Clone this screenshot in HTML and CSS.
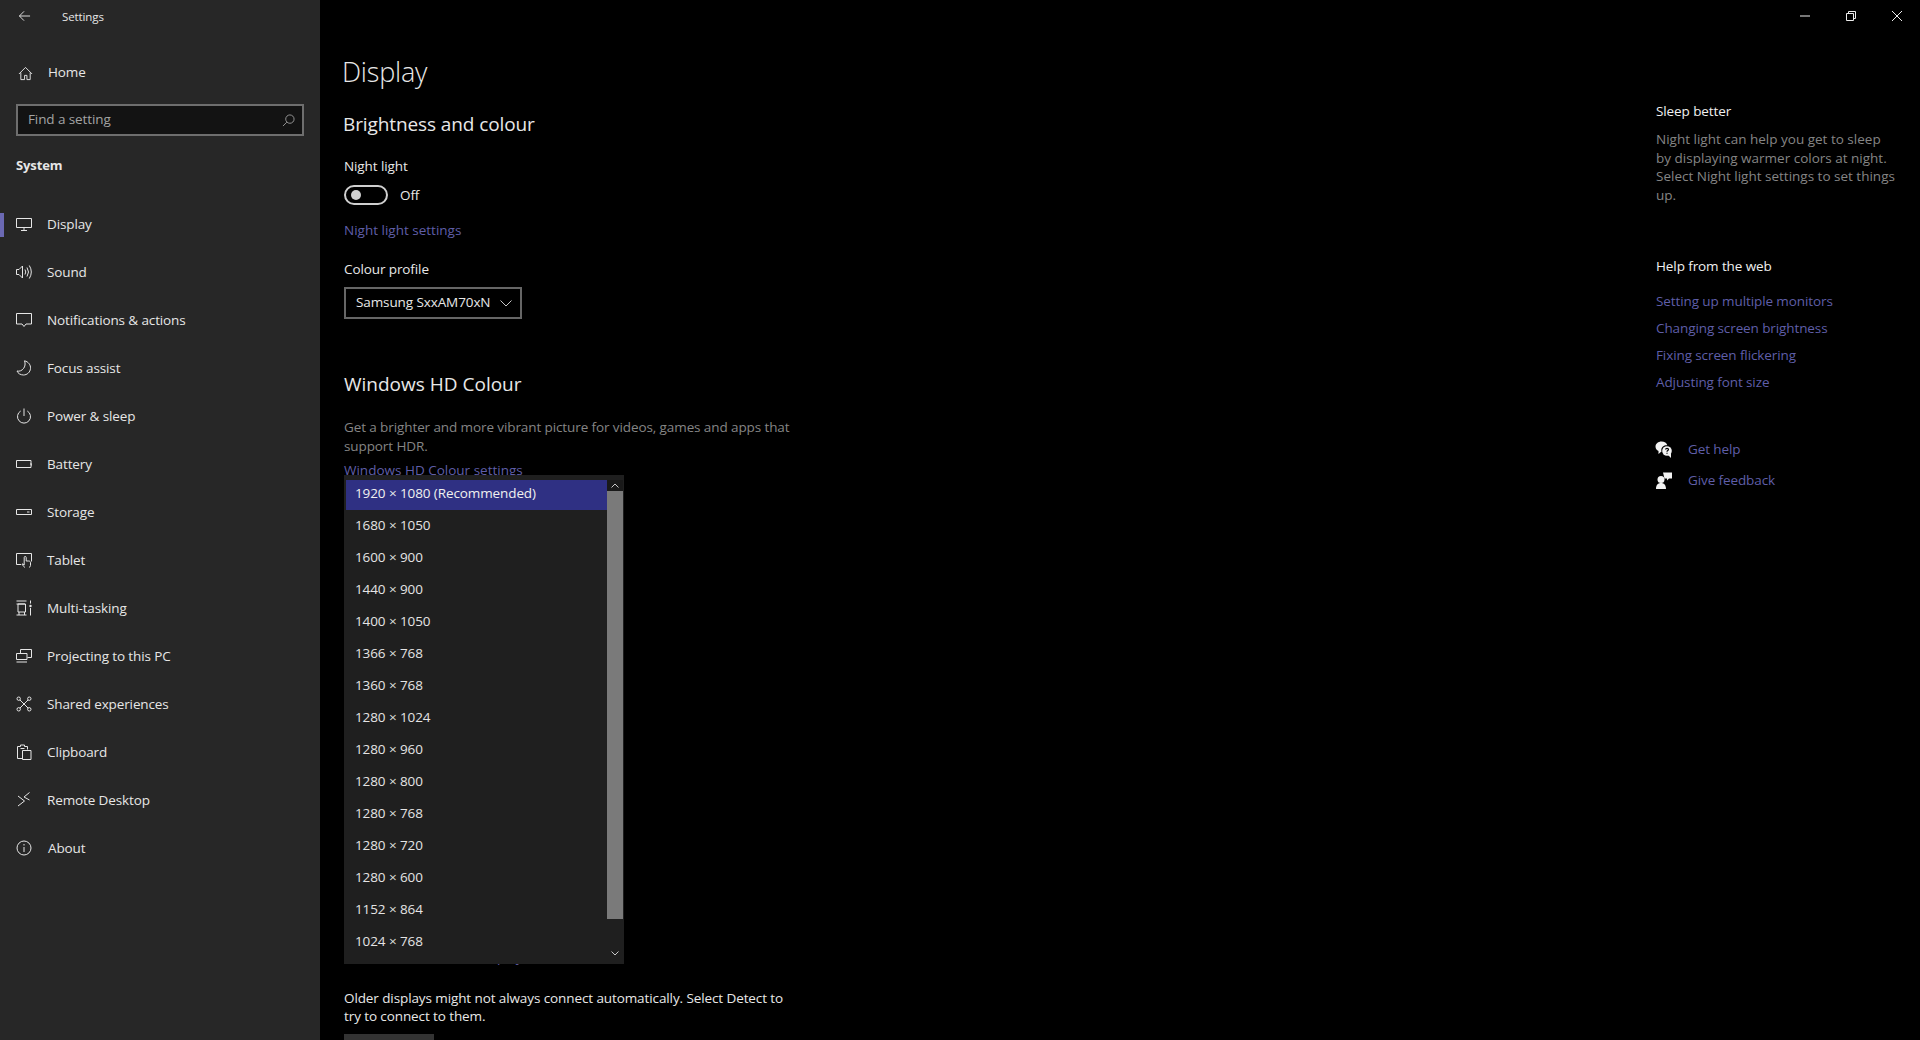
FILE: index.html
```html
<!DOCTYPE html>
<html lang="en">
<head>
<meta charset="utf-8">
<title>Settings</title>
<link rel="stylesheet" href="styles.css">
</head>
<body>
<div class="app">
  <aside class="sidebar">
    <div class="appbar">
      <svg class="ic back" viewBox="0 0 14 12"><path d="M13 6H1.500M6.500 1L1.500 6l5 5"/></svg>
      <span class="apptitle">Settings</span>
    </div>
    <div class="home">
      <svg class="ic" viewBox="0 0 16 16"><path d="M1 8.500L8 1.500l7 7M3 7v7.500h4V10h2.500v4.500H13V7"/></svg>
      <span>Home</span>
    </div>
    <div class="search">
      <span>Find a setting</span>
      <svg class="ic search-ic" viewBox="0 0 14 14"><circle cx="8.500" cy="5.500" r="4.500"/><path d="M5.200 8.800L1 13"/></svg>
    </div>
    <div class="system">System</div>
    <nav class="nav">
      <div class="row active"><svg class="ic" viewBox="0 0 16 16"><path d="M.5 2.500h15v9H.5zM8 11.500v2.500M5 14.500h6"/></svg><span>Display</span></div>
      <div class="row"><svg class="ic" viewBox="0 0 16 16"><path d="M.5 5.500h2.500L6.500 2v12L3 10.500H.5zM9 5.500q1.500 2.500 0 5M11 3.500q3 4.500 0 9M13.300 1.500q4 6.500 0 13"/></svg><span>Sound</span></div>
      <div class="row"><svg class="ic" viewBox="0 0 16 16"><path d="M.5 1.500h15v10.500h-5.500L8 14.500 6 12H.5z"/></svg><span>Notifications &amp; actions</span></div>
      <div class="row"><svg class="ic" viewBox="0 0 16 16"><path d="M8.500 .8c4 1 6.300 4.200 6 7.700-.3 3.700-3.400 6.500-7 6.500-3 0-5.600-1.600-6.500-4 5 1.300 9.800-4.400 7.500-10.200z"/></svg><span>Focus assist</span></div>
      <div class="row"><svg class="ic" viewBox="0 0 16 16"><path d="M8 .5v7.500M4.700 3a6.500 6.500 0 1 0 6.600 0"/></svg><span>Power &amp; sleep</span></div>
      <div class="row"><svg class="ic" viewBox="0 0 16 16"><path d="M.5 4.500h14.500v7H.5zM15 7v2h1"/></svg><span>Battery</span></div>
      <div class="row"><svg class="ic" viewBox="0 0 16 16"><path d="M.5 5.500h15v5H.5zM11 8h2.500"/></svg><span>Storage</span></div>
      <div class="row"><svg class="ic" viewBox="0 0 16 16"><path d="M5 12.500H.5v-11h15v8M9 15.500c-1.200-1-2.700-2.300-3-3.500l1 0 1.200 1V5.500a1 1 0 0 1 2 0V9h2.500c1.500 0 1.800 1 1.800 2v2.500l-1 2"/></svg><span>Tablet</span></div>
      <div class="row"><svg class="ic" viewBox="0 0 16 16"><path d="M.5 1h10M.5 15h10M2 4h7.500v8H2zM.5 4H9M3 12v3M8.500 12v3M14.500 .5v3M14.500 8v7.500"/><circle class="dot" cx="14.500" cy="6" r="1.200"/></svg><span>Multi-tasking</span></div>
      <div class="row"><svg class="ic" viewBox="0 0 16 16"><path d="M4.500 5.500v-4h11v8h-4M.5 5.500h10.500v6H.5zM.5 14h10.500"/></svg><span>Projecting to this PC</span></div>
      <div class="row"><svg class="ic" viewBox="0 0 16 16"><circle cx="2.700" cy="2.700" r="1.700"/><circle cx="13.300" cy="2.700" r="1.700"/><circle cx="2.700" cy="13.300" r="1.700"/><circle cx="13.300" cy="13.300" r="1.700"/><path d="M4 4l8 8M12 4l-8 8"/></svg><span>Shared experiences</span></div>
      <div class="row"><svg class="ic" viewBox="0 0 16 16"><path d="M6 14.500H1.500V2.500h3V1h4v1.500h3v3M6.500 6.500h8.500v9H6.500zM4.500 4.500h4"/></svg><span>Clipboard</span></div>
      <div class="row"><svg class="ic" viewBox="0 0 16 16"><path d="M2 4l6.500 5L2 14M13.500 .5L8 5l5.500 3"/></svg><span>Remote Desktop</span></div>
      <div class="row about"><svg class="ic" viewBox="0 0 16 16"><circle cx="8" cy="8" r="7"/><path d="M8 7v5M8 4v1.500"/></svg><span>About</span></div>
    </nav>
  </aside>

  <main class="main">
    <h1 class="title">Display</h1>
    <h2 class="h2 first">Brightness and colour</h2>
    <div class="label nl">Night light</div>
    <div class="toggle-row"><span class="toggle"><span class="knob"></span></span><span>Off</span></div>
    <a class="link settings">Night light settings</a>
    <div class="label cp">Colour profile</div>
    <div class="select"><span>Samsung SxxAM70xN</span><svg class="ic chev" viewBox="0 0 12 7"><path d="M.5 .5L6 6l5.500-5.500"/></svg></div>
    <h2 class="h2 hd">Windows HD Colour</h2>
    <p class="muted hdp">Get a brighter and more vibrant picture for videos, games and apps that support HDR.</p>
    <a class="link hdl">Windows HD Colour settings</a>
    <a class="link wireless">Connect to a wireless display</a>
    <p class="older">Older displays might not always connect automatically. Select Detect to try to connect to them.</p>
    <button class="detect">Detect</button>

    <div class="dropdown">
      <ul class="options">
        <li class="sel">1920 × 1080 (Recommended)</li>
        <li>1680 × 1050</li>
        <li>1600 × 900</li>
        <li>1440 × 900</li>
        <li>1400 × 1050</li>
        <li>1366 × 768</li>
        <li>1360 × 768</li>
        <li>1280 × 1024</li>
        <li>1280 × 960</li>
        <li>1280 × 800</li>
        <li>1280 × 768</li>
        <li>1280 × 720</li>
        <li>1280 × 600</li>
        <li>1152 × 864</li>
        <li>1024 × 768</li>
      </ul>
      <div class="scroll">
        <div class="sbtn up"><svg class="ic" viewBox="0 0 8 5"><path d="M.5 4.500L4 1l3.500 3.500"/></svg></div>
        <div class="thumb"></div>
        <div class="track"></div>
        <div class="sbtn"><svg class="ic" viewBox="0 0 8 5"><path d="M.5 .5L4 4 7.500 .5"/></svg></div>
      </div>
    </div>
  </main>

  <aside class="side">
    <div class="winctl">
      <div class="wbtn"><svg class="ic" viewBox="0 0 10 10"><path d="M0 5h10"/></svg></div>
      <div class="wbtn"><svg class="ic" viewBox="0 0 10 10"><path d="M.5 2.500h7v7h-7zM2.500 2.500V.5h7v7h-2"/></svg></div>
      <div class="wbtn"><svg class="ic" viewBox="0 0 10 10"><path d="M0 0l10 10M10 0L0 10"/></svg></div>
    </div>
    <div class="sidebody">
      <h3 class="h3">Sleep better</h3>
      <p class="muted sleep">Night light can help you get to sleep<br>by displaying warmer colors at night.<br>Select Night light settings to set things<br>up.</p>
      <h3 class="h3 web">Help from the web</h3>
      <ul class="weblinks">
        <li><a class="link">Setting up multiple monitors</a></li>
        <li><a class="link">Changing screen brightness</a></li>
        <li><a class="link">Fixing screen flickering</a></li>
        <li><a class="link">Adjusting font size</a></li>
      </ul>
      <div class="act gethelp">
        <svg class="act-ic" viewBox="0 0 17 17"><path class="fill" d="M6.500 .5c3 0 5.300 1.500 5.800 3.700-2.900-.4-6 1.500-6 4.800 0 .6.100 1.100.3 1.600l-.1 0-3 2.400v-3C1.700 9.100.5 7.300.5 5.400.5 2.700 3.200.5 6.500 .5z"/><circle class="fill" cx="12" cy="10" r="4.800"/><path class="fill" d="M13 14l3 3v-5z"/><path class="qm" d="M10.500 8.500c.2-1.500 3-1.500 3 0 0 1.200-1.500 1-1.500 2.300M12 11.800v1"/></svg>
        <a class="link">Get help</a>
      </div>
      <div class="act">
        <svg class="act-ic" viewBox="0 0 17 17"><circle class="fill" cx="6" cy="7.500" r="3.500"/><path class="fill" d="M1 17c0-4 2-6 5-6s5 2 5 6zM8 .5h9v6h-3l-2 2v-2H9.500z"/></svg>
        <a class="link">Give feedback</a>
      </div>
    </div>
  </aside>
</div>
</body>
</html>
```
FILE: styles.css
```css
* { box-sizing: border-box; }
html, body { margin: 0; height: 100%; overflow: hidden; background: #000; }
body { font-family: "Open Sans", "Noto Sans", sans-serif; font-size: 13.500px; letter-spacing: -.1px; color: #e8e8e8; }
h1, h2, h3, p, ul { margin: 0; padding: 0; font-weight: 400; }
ul { list-style: none; }
.app { display: flex; height: 1040px; overflow: hidden; }
.ic { fill: none; stroke: currentColor; stroke-width: 1; display: block; flex: none; }

/* sidebar */
.sidebar { width: 320px; flex: none; background: #272727; color: #e6e6e6; }
.appbar { display: flex; align-items: center; height: 34px; padding: 0 0 2px 18px; }
.back { width: 13px; height: 12px; margin-top: -1px; }
.apptitle { font-size: 11.500px; margin-left: 31px; }
.home { display: flex; align-items: center; height: 24px; margin-top: 27px; padding: 0 0 2px 18px; gap: 15px; font-size: 13.500px; }
.home .ic { width: 15px; height: 15px; margin-top: 2px; }
.search { display: flex; align-items: center; justify-content: space-between; width: 288px; height: 32px; margin: 19px 0 0 16px; padding: 0 7px 2px 10px; border: 2px solid #6e6e6e; background: #131313; color: #a3a3a3; }
.search-ic { width: 13px; height: 13px; color: #9a9a9a; margin-top: 2px; }
.system { margin: 18px 0 0 16px; padding-bottom: 1px; line-height: 22px; font-weight: 700; font-size: 13px; }
.nav { margin-top: 24px; }
.row { position: relative; display: flex; align-items: center; height: 48px; padding: 0 0 2px 16px; gap: 15px; letter-spacing: -.12px; }
.row .ic { width: 16px; height: 16px; }
.about { gap: 16px; }
.dot { fill: currentColor; stroke: none; }
.active::before { content: ""; position: absolute; left: 0; top: 12px; width: 4px; height: 24px; background: #6b69b3; }

/* main */
.main { position: relative; flex: 1; padding: 52px 0 0 24px; overflow: hidden; color: #e8e8e8; }
.title { font-size: 27px; line-height: 40px; margin-left: -2px; font-weight: 300; letter-spacing: -.2px; }
.h2 { font-size: 19px; line-height: 28px; letter-spacing: -.1px; }
.first { margin: 18px 0 0 -1px; }
.label { line-height: 20px; }
.nl { margin-top: 18px; }
.toggle-row { display: flex; align-items: center; gap: 12px; height: 20px; margin-top: 9px; }
.toggle { display: flex; align-items: center; width: 44px; height: 20px; padding-left: 5px; border: 2px solid #cfcfcf; border-radius: 10px; }
.knob { width: 10px; height: 10px; border-radius: 50%; background: #cfcfcf; }
.link { display: block; line-height: 20px; color: #5f5ea8; }
.settings { margin-top: 15px; letter-spacing: 0; }
.cp { margin-top: 19px; }
.select { display: flex; align-items: center; justify-content: space-between; width: 178px; height: 32px; margin-top: 8px; padding: 0 8px 2px 10px; border: 2px solid #666; }
.chev { width: 12px; height: 7px; color: #c8c8c8; margin-top: 2px; }
.hd { margin-top: 51px; letter-spacing: 0; }
.muted { color: #858585; line-height: 18.500px; }
.hdp { width: 480px; margin-top: 20px; }
.hdl { margin-top: 5px; letter-spacing: 0; }
.wireless { margin-top: 467px; }
.older { width: 452px; margin-top: 22px; line-height: 18px; }
.detect { display: block; width: 90px; height: 32px; margin-top: 9px; border: 0; background: #333; color: #e8e8e8; font: inherit; }

/* dropdown list */
.dropdown { position: absolute; left: 24px; top: 475px; display: flex; width: 280px; height: 489px; padding: 5px 1px 0 2px; background: #1f1f1f; }
.options { width: 261px; flex: none; color: #e4e4e4; letter-spacing: -.1px; }
.options li { display: flex; align-items: center; height: 32px; padding: 0 0 5px 9px; }
.options .sel { height: 30px; margin-bottom: 1px; background: #2f3083; color: #f0f0f0; }
.scroll { display: flex; flex-direction: column; width: 16px; flex: none; }
.sbtn { display: flex; align-items: center; justify-content: center; height: 11px; color: #c8c8c8; }
.sbtn .ic { width: 8px; height: 5px; }
.up { background: #191919; }
.thumb { height: 428px; background: #7a7a7a; }
.track { height: 29px; }

/* right column */
.side { width: 264px; flex: none; }
.winctl { display: flex; justify-content: flex-end; height: 32px; }
.wbtn { display: flex; align-items: center; justify-content: center; width: 46px; height: 32px; color: #ececec; }
.wbtn .ic { width: 10px; height: 10px; }
.sidebody { padding-top: 69px; }
.h3 { font-size: 13.500px; line-height: 20px; color: #f0f0f0; }
.sleep { margin-top: 9px; white-space: nowrap; letter-spacing: 0; }
.web { margin-top: 52px; }
.weblinks { margin-top: 15px; }
.weblinks li { height: 27px; }
.act { display: flex; align-items: center; gap: 16px; height: 20px; margin-top: 11px; }
.gethelp { margin-top: 40px; }
.act-ic { width: 17px; height: 17px; flex: none; margin-left: -1px; }
.fill { fill: #f2f2f2; stroke: none; }
.qm { fill: none; stroke: #000; stroke-width: 1.200; }
```
